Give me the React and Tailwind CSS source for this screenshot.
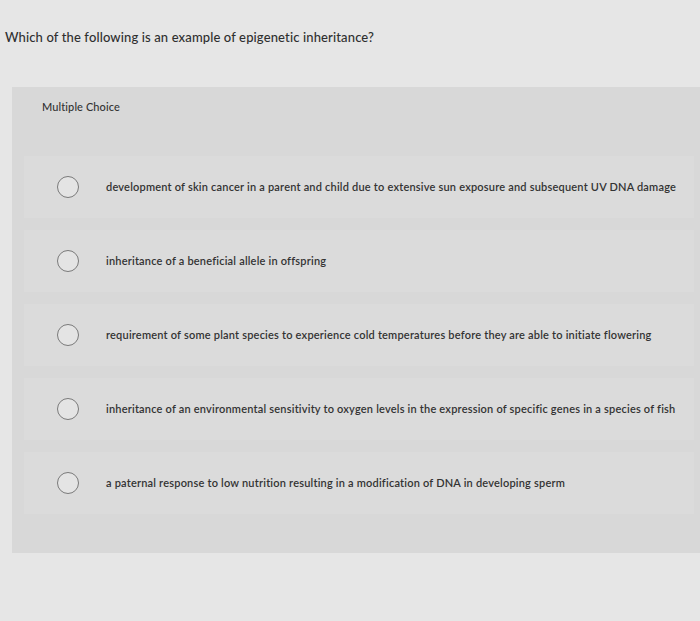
const options = [
  'development of skin cancer in a parent and child due to extensive sun exposure and subsequent UV DNA damage',
  'inheritance of a beneficial allele in offspring',
  'requirement of some plant species to experience cold temperatures before they are able to initiate flowering',
  'inheritance of an environmental sensitivity to oxygen levels in the expression of specific genes in a species of fish',
  'a paternal response to low nutrition resulting in a modification of DNA in developing sperm',
];

export default function App() {
  return (
    <div
      className="min-h-[621px] w-[700px] overflow-hidden bg-[#e6e6e6] text-[#2f2f2f]"
      style={{ fontFamily: 'Lato, "Liberation Sans", sans-serif' }}
    >
      <p className="pl-[5px] pt-[29px] text-[13px] font-medium leading-[16px] tracking-[0.13px]">
        Which of the following is an example of epigenetic inheritance?
      </p>

      <div className="ml-[12px] mt-[42px] bg-[#d8d8d8] pb-[33px] pt-[13px]">
        <p className="pl-[30px] text-[11px] font-medium leading-[14px] tracking-[0.1px] text-[#333]">Multiple Choice</p>

        <div className="mt-[36px] flex flex-col">
          {options.map((text) => (
            <div key={text} className="flex h-[74px] items-center py-[6px] pl-[12px] pr-[6px]">
              <div className="flex h-full w-full items-center bg-[#dbdbdb] pl-[33px]">
                <span className="h-[22px] w-[22px] shrink-0 rounded-full border-[1.5px] border-[#7a7a7a] bg-[#e4e4e4]" />
                <span className="ml-[27px] whitespace-nowrap text-[11px] font-semibold leading-[14px] tracking-[0.2px] text-[#333]">
                  {text}
                </span>
              </div>
            </div>
          ))}
        </div>
      </div>
    </div>
  );
}
